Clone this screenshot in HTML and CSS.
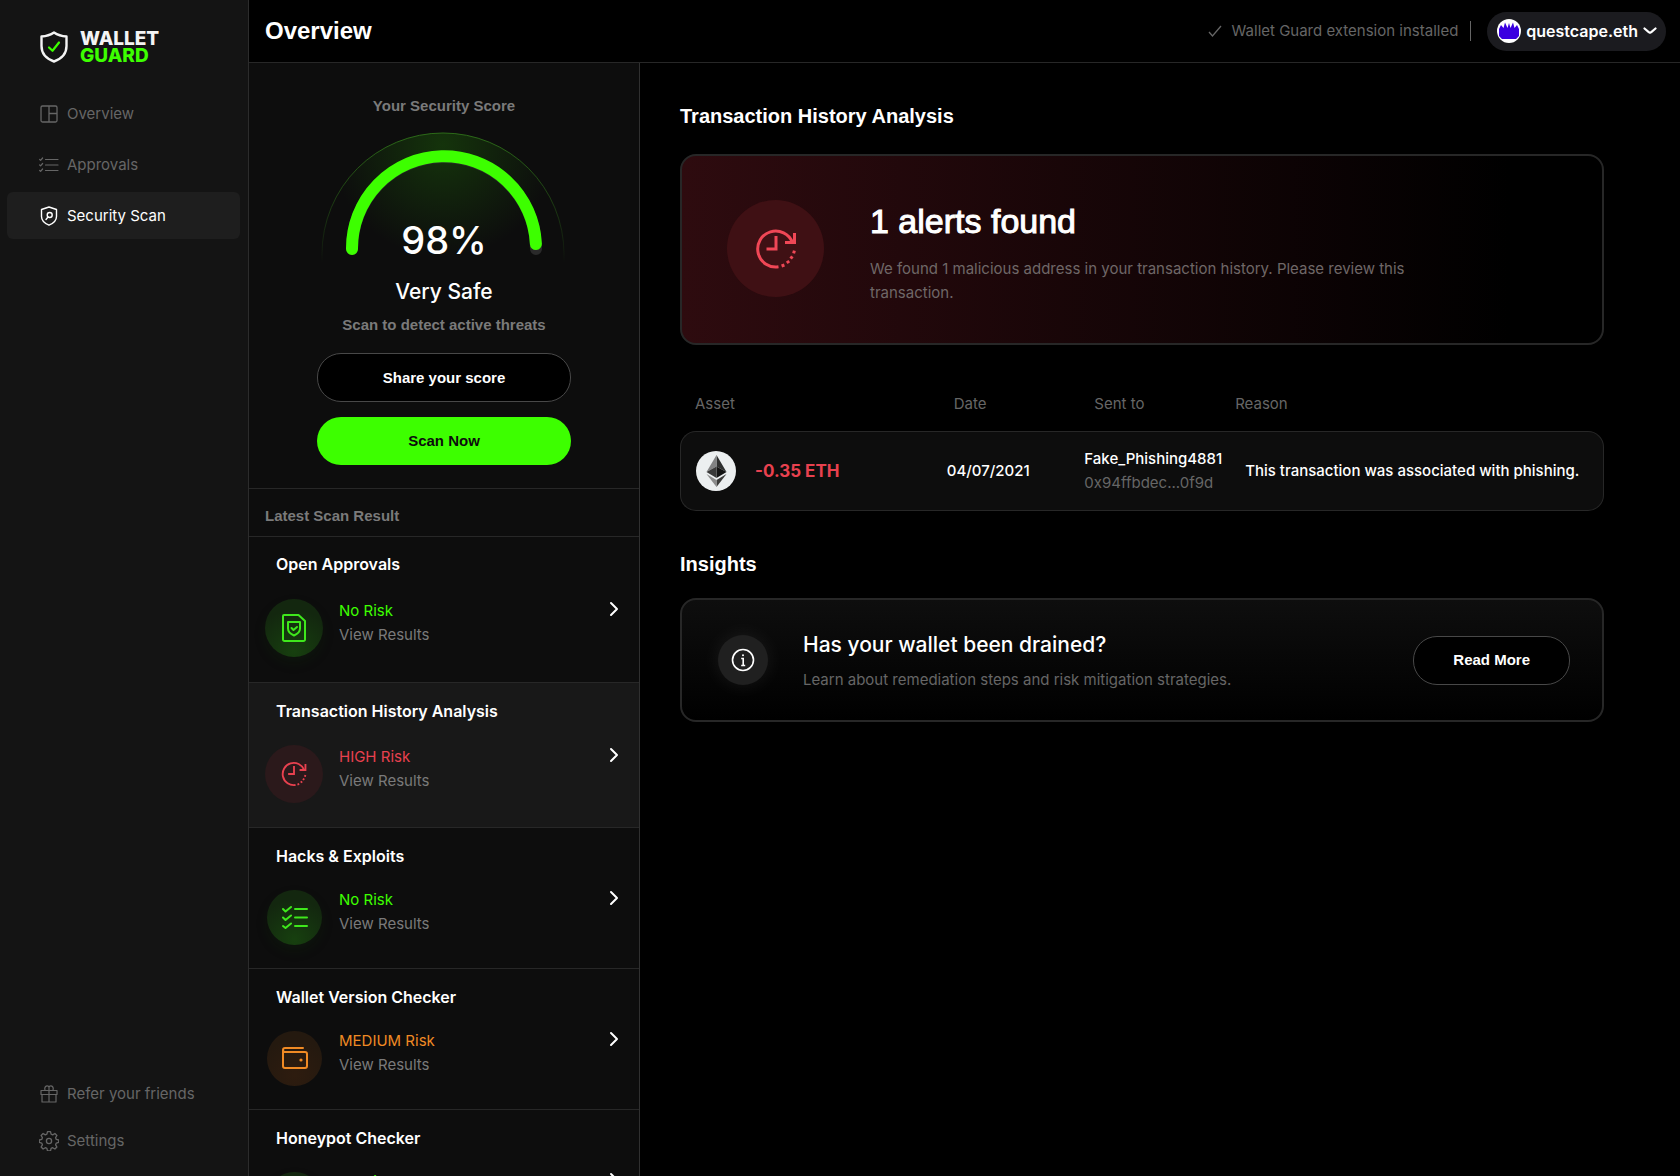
FILE: index.html
```html
<!DOCTYPE html>
<html lang="en">
<head>
<meta charset="utf-8">
<meta name="viewport" content="width=device-width, initial-scale=1">
<title>Wallet Guard – Security Scan</title>
<link rel="stylesheet" href="styles.css">
</head>
<body>
<svg class="sprite" aria-hidden="true">
  <symbol id="i-history" viewBox="0 0 42 42">
    <g fill="none" stroke="currentColor" stroke-width="3">
      <path d="M37.5 14.5A18 18 0 1 0 23.500 38.800"/>
      <path d="M39.500 5v9.500H30M21 8v13H11.500"/>
    </g>
    <g fill="currentColor"><rect x="26.500" y="36" width="3" height="3" transform="rotate(-20 28 37.500)"/><rect x="31.500" y="32.500" width="3" height="3" transform="rotate(-35 33 34)"/><rect x="35" y="28" width="3" height="3" transform="rotate(-55 36.500 29.500)"/><rect x="37.500" y="22.500" width="3" height="3" transform="rotate(-75 39 24)"/></g>
  </symbol>
  <symbol id="i-doc" viewBox="0 0 26 30">
    <g fill="none" stroke="currentColor" stroke-width="2" stroke-linejoin="round" stroke-linecap="round">
      <path d="M3 2h14.500L24 8v18.500a1.500 1.500 0 0 1-1.500 1.500h-19A1.500 1.500 0 0 1 2 26.500V3a1 1 0 0 1 1-1z"/>
      <path d="M7 9h12v6.500c0 3.500-2.500 5.500-6 7-3.500-1.500-6-3.500-6-7z"/>
      <path d="M10.500 15l2 2 3.500-3"/>
    </g>
  </symbol>
  <symbol id="i-checks" viewBox="0 0 26 24">
    <g fill="none" stroke="currentColor" stroke-width="2" stroke-linecap="round" stroke-linejoin="round">
      <path d="M13 4h12M13 12.500h12M13 21h12M1 4l2.500 2.500L9 2M1 12.500L3.500 15 9 10.500M1 21l2.500 2L9 18.500"/>
    </g>
  </symbol>
  <symbol id="i-list" viewBox="0 0 20 16">
    <path fill="none" stroke="currentColor" stroke-width="1.200" stroke-linecap="round" stroke-linejoin="round" d="M6.500 2.500h12.500M6.500 8h12.500M6.500 13.500h12.500M.7 2.500l.9.9 2-2.400M.7 8l.9.9 2-2.400M.7 13.500l.9.9 2-2.400"/>
  </symbol>
  <symbol id="i-wallet" viewBox="0 0 28 24">
    <g fill="none" stroke="currentColor" stroke-width="2" stroke-linejoin="round" stroke-linecap="round">
      <path d="M22 2H4a2 2 0 0 0-2 2v16a2 2 0 0 0 2 2h20a2 2 0 0 0 2-2V8a2 2 0 0 0-2-2H4a2 2 0 0 1-2-2"/>
    </g>
    <circle cx="20" cy="14" r="1.600" fill="currentColor"/>
  </symbol>
  <symbol id="i-chevron" viewBox="0 0 10 16">
    <path d="M2 2l6 6-6 6" fill="none" stroke="currentColor" stroke-width="2" stroke-linecap="round" stroke-linejoin="round"/>
  </symbol>
</svg>

<div class="app">
  <aside class="sidebar">
    <a class="brand" href="#" aria-label="Wallet Guard">
      <svg class="brand__mark" viewBox="0 0 28 32" fill="none" aria-hidden="true">
        <path d="M14 1.500C18 4.200 22 5.200 26.500 5.500V15c0 8-5.500 13-12.500 15.500C7 28 1.500 23 1.500 15V5.500C6 5.200 10 4.200 14 1.500z" stroke="#f4f4f4" stroke-width="2.400" stroke-linejoin="round"/>
        <path d="M9 16.500l3.500 3.300 6.500-8.300" stroke="#3dff00" stroke-width="2.200" stroke-linecap="round" stroke-linejoin="round"/>
      </svg>
      <span class="brand__name"><span>WALLET</span><span class="brand__accent">GUARD</span></span>
    </a>
    <nav class="nav" aria-label="Main">
      <a class="nav__link" href="#">
        <svg class="nav__icon" viewBox="0 0 20 20" fill="none" stroke="currentColor" stroke-width="1.300" aria-hidden="true"><rect x="2" y="2" width="16" height="16" rx="1.500"/><path d="M10 2v16M10 9.500h8" /></svg>
        Overview</a>
      <a class="nav__link" href="#">
        <svg class="nav__icon" aria-hidden="true"><use href="#i-list"/></svg>
        Approvals</a>
      <a class="nav__link nav__link--active" href="#" aria-current="page">
        <svg class="nav__icon" viewBox="0 0 20 20" fill="none" stroke="currentColor" stroke-width="1.400" stroke-linejoin="round" stroke-linecap="round" aria-hidden="true"><path d="M10 1l7.500 2.500v7c0 4-3.500 7-7.500 8.700-4-1.700-7.500-4.700-7.500-8.700v-7z"/><circle cx="10.700" cy="9" r="2.500"/><path d="M9 11l-2 2.500"/></svg>
        Security Scan</a>
    </nav>
    <nav class="nav nav--bottom" aria-label="More">
      <a class="nav__link" href="#">
        <svg class="nav__icon" viewBox="0 0 20 20" fill="none" stroke="currentColor" stroke-width="1.200" stroke-linejoin="round" aria-hidden="true"><path d="M2 6.500h16v4H2zM3 10.500h14V18H3zM10 6.500V18M6 6.500C5 3 7 1.500 9 2l1 1 1-1c2-.5 4 1 3 4.500M10 3v3.500"/></svg>
        Refer your friends</a>
      <a class="nav__link" href="#">
        <svg class="nav__icon" viewBox="0 0 20 20" fill="none" stroke="currentColor" stroke-width="1.300" stroke-linejoin="round" aria-hidden="true"><path d="M8.500 .7h3l.6 2.500 1.600.7 2.200-1.400 2 2-1.300 2.200.7 1.700 2.400.6v2.400l-2.400.7-.7 1.700 1.300 2.200-2 2-2.200-1.300-1.600.7-.6 2.500h-3l-.6-2.500-1.600-.7-2.200 1.300-2-2 1.300-2.200-.7-1.700L.3 11.400V9l2.400-.6.7-1.700-1.300-2.200 2-2 2.200 1.400 1.600-.7z"/><circle cx="10" cy="10" r="2.600"/></svg>
        Settings</a>
    </nav>
  </aside>

  <div class="page">
    <header class="topbar">
      <h1 class="topbar__title">Overview</h1>
      <p class="status">
        <svg class="status__check" viewBox="0 0 14 12" aria-hidden="true"><path d="M1 7l3.500 4L13 1" fill="none" stroke="currentColor" stroke-width="1.300"/></svg>
        Wallet Guard extension installed</p>
      <span class="topbar__rule"></span>
      <button class="account" type="button">
        <svg class="account__avatar" viewBox="0 0 24 24" aria-hidden="true"><circle cx="12" cy="12" r="12" fill="#fff"/><path fill="#3a00e0" d="M2 10l2-4 2.500 3L8 3.500 10.500 9 12 4l1.500 5L16 3.500 17.500 9 20 6l2 4v7l-3 3H5l-3-3z"/></svg>
        questcape.eth
        <svg class="account__caret" viewBox="0 0 14 8" aria-hidden="true"><path d="M1.500 1.500L6 5.300a1.500 1.500 0 0 0 2 0L12.500 1.500" fill="none" stroke="currentColor" stroke-width="2.200" stroke-linecap="round"/></svg>
      </button>
    </header>

    <div class="columns">
      <section class="panel">
        <div class="score">
          <h2 class="score__label">Your Security Score</h2>
          <div class="gauge">
            <svg class="gauge__dial" viewBox="0 0 250 134" fill="none" aria-hidden="true">
              <defs>
                <linearGradient id="rim" x1="0" y1="0" x2="0" y2="1"><stop offset="0" stop-color="#2c6a18"/><stop offset=".9" stop-color="#2c6a18" stop-opacity=".15"/><stop offset="1" stop-color="#2c6a18" stop-opacity="0"/></linearGradient>
                <radialGradient id="glow" gradientUnits="userSpaceOnUse" cx="124" cy="14" r="112"><stop offset="0" stop-color="#1c5a0a" stop-opacity=".5"/><stop offset="1" stop-color="#1c5a0a" stop-opacity="0"/></radialGradient>
              </defs>
              <path d="M3 132v-9a121 121 0 0 1 242 0v9z" fill="url(#glow)"/>
              <path d="M3 132v-9a121 121 0 0 1 242 0v9" stroke="url(#rim)"/>
              <path d="M33 118a92 92 0 0 1 184 0" stroke="#2a2a2a" stroke-width="12" stroke-linecap="round"/>
              <path d="M33 118a92 92 0 0 1 183.900-5" stroke="#3dff00" stroke-width="12" stroke-linecap="round"/>
            </svg>
            <strong class="gauge__value">98%</strong>
          </div>
          <p class="score__grade">Very Safe</p>
          <p class="score__hint">Scan to detect active threats</p>
          <button class="btn btn--outline btn--wide" type="button">Share your score</button>
          <button class="btn btn--primary btn--wide" type="button">Scan Now</button>
        </div>
        <h2 class="panel__heading">Latest Scan Result</h2>
        <ul class="scans">
          <li class="scan">
            <h3 class="scan__title">Open Approvals</h3>
            <a class="scan__body" href="#">
              <span class="scan__badge scan__badge--ok"><svg class="ico-doc" aria-hidden="true"><use href="#i-doc"/></svg></span>
              <span class="scan__text"><span class="risk risk--none">No Risk</span><span>View Results</span></span>
              <svg class="scan__chevron" aria-hidden="true"><use href="#i-chevron"/></svg>
            </a>
          </li>
          <li class="scan scan--selected">
            <h3 class="scan__title">Transaction History Analysis</h3>
            <a class="scan__body" href="#">
              <span class="scan__badge scan__badge--high"><svg class="ico-history" aria-hidden="true"><use href="#i-history"/></svg></span>
              <span class="scan__text"><span class="risk risk--high">HIGH Risk</span><span>View Results</span></span>
              <svg class="scan__chevron" aria-hidden="true"><use href="#i-chevron"/></svg>
            </a>
          </li>
          <li class="scan scan--compact">
            <h3 class="scan__title">Hacks &amp; Exploits</h3>
            <a class="scan__body" href="#">
              <span class="scan__badge scan__badge--ok"><svg class="ico-checks" aria-hidden="true"><use href="#i-checks"/></svg></span>
              <span class="scan__text"><span class="risk risk--none">No Risk</span><span>View Results</span></span>
              <svg class="scan__chevron" aria-hidden="true"><use href="#i-chevron"/></svg>
            </a>
          </li>
          <li class="scan scan--compact">
            <h3 class="scan__title">Wallet Version Checker</h3>
            <a class="scan__body" href="#">
              <span class="scan__badge scan__badge--medium"><svg class="ico-wallet" aria-hidden="true"><use href="#i-wallet"/></svg></span>
              <span class="scan__text"><span class="risk risk--medium">MEDIUM Risk</span><span>View Results</span></span>
              <svg class="scan__chevron" aria-hidden="true"><use href="#i-chevron"/></svg>
            </a>
          </li>
          <li class="scan scan--compact">
            <h3 class="scan__title">Honeypot Checker</h3>
            <a class="scan__body" href="#">
              <span class="scan__badge scan__badge--ok"><svg class="ico-doc" aria-hidden="true"><use href="#i-doc"/></svg></span>
              <span class="scan__text"><span class="risk risk--none">No Risk</span><span>View Results</span></span>
              <svg class="scan__chevron" aria-hidden="true"><use href="#i-chevron"/></svg>
            </a>
          </li>
        </ul>
      </section>

      <main class="main">
        <h2 class="main__heading">Transaction History Analysis</h2>
        <section class="alert">
          <span class="alert__badge"><svg class="alert__icon" aria-hidden="true"><use href="#i-history"/></svg></span>
          <div class="alert__text">
            <h3 class="alert__title">1 alerts found</h3>
            <p class="alert__desc">We found 1 malicious address in your transaction history. Please review this transaction.</p>
          </div>
        </section>

        <table class="tx">
          <thead>
            <tr><th class="tx__asset" scope="col">Asset</th><th class="tx__date" scope="col">Date</th><th class="tx__to" scope="col">Sent to</th><th class="tx__reason" scope="col">Reason</th></tr>
          </thead>
          <tbody>
            <tr>
              <td class="tx__asset">
                <span class="asset">
                  <svg class="asset__logo" viewBox="0 0 40 40" aria-hidden="true"><circle cx="20" cy="20" r="20" fill="#eceff0"/><path fill="#2f3030" d="M20.500 4v11.500l10 5.500z"/><path fill="#828384" d="M20.500 4v11.500l-10 5.500z"/><path fill="#131313" d="M20.500 15.500v11.500l10-6z"/><path fill="#393939" d="M20.500 15.500v11.500l-10-6z"/><path fill="#3c3c3b" d="M20.500 29v7l10-13z"/><path fill="#8c8c8c" d="M20.500 29v7l-10-13z"/></svg>
                  -0.35 ETH
                </span>
              </td>
              <td class="tx__date">04/07/2021</td>
              <td class="tx__to">Fake_Phishing4881<span class="tx__hash">0x94ffbdec...0f9d</span></td>
              <td class="tx__reason">This transaction was associated with phishing.</td>
            </tr>
          </tbody>
        </table>

        <h2 class="main__heading main__heading--insights">Insights</h2>
        <section class="insight">
          <span class="insight__badge"><svg class="insight__icon" viewBox="0 0 24 24" fill="none" stroke="currentColor" stroke-width="1.600" aria-hidden="true"><circle cx="12" cy="12" r="10.500"/><path d="M10.200 10.500h2v7M10.200 17.500h4"/><circle cx="12" cy="7.300" r="1" fill="currentColor" stroke="none"/></svg></span>
          <div class="insight__text">
            <h3 class="insight__title">Has your wallet been drained?</h3>
            <p class="insight__desc">Learn about remediation steps and risk mitigation strategies.</p>
          </div>
          <button class="btn btn--outline" type="button">Read More</button>
        </section>
      </main>
    </div>
  </div>
</div>
</body>
</html>
```
FILE: styles.css
```css
:root {
  --text: "Inter", "Liberation Sans", sans-serif;
  --display: "Liberation Sans", Arial, sans-serif;
  --green: #3dff00;
  --red: #e8414f;
  --orange: #f08a24;
  --muted: #666;
  --line: #272727;
}

* { box-sizing: border-box; }

body {
  margin: 0;
  background: #000;
  color: #fff;
  font: 400 15px/24px var(--text);
}

h1, h2, h3, p, ul { margin: 0; padding: 0; }
a { color: inherit; text-decoration: none; }
button { font: inherit; color: inherit; border: 0; cursor: pointer; }
.sprite { display: none; }

.app { display: flex; height: 100vh; }

/* Sidebar */
.sidebar {
  display: flex;
  flex: none;
  flex-direction: column;
  width: 249px;
  padding: 30px 8px 12px 7px;
  background: #141414;
  border-right: 1px solid #2c2c2c;
}
.brand { display: flex; align-items: center; gap: 12px; padding-left: 33px; }
.brand__mark { width: 28px; height: 32px; }
.brand__name { display: grid; font-size: 19px; line-height: 17px; font-weight: 800; color: #f4f4f4; }
.brand__accent { color: var(--green); }
.nav { display: grid; gap: 4px; margin-top: 26px; }
.nav--bottom { gap: 0; margin-top: auto; }
.nav__link {
  display: flex;
  align-items: center;
  gap: 8px;
  height: 47px;
  padding-left: 32px;
  border-radius: 6px;
  color: var(--muted);
}
.nav__link--active { background: #1e1e1e; color: #fff; }
.nav__icon { width: 20px; height: 20px; }

/* Top bar */
.page { display: flex; flex: 1; flex-direction: column; min-width: 0; }
.topbar {
  display: flex;
  flex: none;
  align-items: center;
  height: 63px;
  padding: 0 14px 0 16px;
  border-bottom: 1px solid var(--line);
}
.topbar__title { margin-right: auto; font: 700 24px/32px var(--display); }
.status { display: flex; align-items: center; gap: 10px; color: var(--muted); }
.status__check { width: 14px; height: 12px; }
.topbar__rule { width: 1px; height: 20px; margin: 0 16px 0 12px; background: var(--muted); }
.account {
  display: flex;
  align-items: center;
  gap: 5px;
  height: 39px;
  padding: 0 9px 0 10px;
  border-radius: 20px;
  background: #1b1b1f;
  font-size: 16px;
  font-weight: 600;
}
.account__avatar { width: 24px; height: 24px; }
.account__caret { width: 14px; height: 8px; }

/* Score and scan list */
.columns { display: flex; flex: 1; min-height: 0; }
.panel {
  flex: none;
  width: 391px;
  overflow-y: auto;
  scrollbar-width: none;
  background: #0d0d0d;
  border-right: 1px solid #303030;
}
.score {
  display: flex;
  flex-direction: column;
  align-items: center;
  padding: 31px 16px 23px;
  border-bottom: 1px solid var(--line);
}
.score__label, .score__hint, .panel__heading {
  font: 700 15px/24px var(--display);
  color: #7a7a7a;
}
.gauge { display: grid; margin-top: 13px; justify-items: center; }
.gauge > * { grid-area: 1 / 1; }
.gauge__dial { width: 250px; height: 134px; }
.gauge__value { align-self: end; font-size: 38px; line-height: 50px; font-weight: 500; }
.score__grade { margin-top: 11px; font-size: 21px; line-height: 32px; font-weight: 500; }
.score__hint { margin: 5px 0 16px; }
.btn {
  height: 48px;
  padding: 0 39px;
  border-radius: 24px;
  font: 700 15px/24px var(--display);
}
.btn--wide { width: 254px; }
.btn--outline { height: 49px; background: #000; border: 1px solid #484848; }
.btn--primary { margin-top: 15px; background: var(--green); color: #0d0d0d; }
.panel__heading { padding: 15px 16px 8px; border-bottom: 1px solid var(--line); }

.scans { list-style: none; }
.scan { padding: 15px 20px 25px 16px; border-bottom: 1px solid var(--line); }
.scan--selected { padding: 16px 20px 24px 16px; background: #181818; }
.scan__title { padding-left: 11px; font-size: 16px; line-height: 24px; font-weight: 600; }
.scan__body { display: flex; align-items: center; gap: 16px; margin-top: 23px; }
.scan--selected .scan__body { margin-top: 22px; }
.scan__badge {
  display: grid;
  flex: none;
  place-items: center;
  width: 58px;
  height: 58px;
  border-radius: 50%;
}
.scan__badge--ok { background: radial-gradient(circle at 50% 90%, #17400f, #13270f 70%); color: #3fe81c; box-shadow: 0 6px 12px #10300a33; }
.scan__badge--high { background: #2b191b; color: var(--red); }
.scan__badge--medium { background: radial-gradient(circle at 50% 80%, #2e1c0f, #24190f 70%); color: var(--orange); }
.scan__text { display: grid; flex: 1; padding-bottom: 10px; color: #7a7a7a; }
.scan__chevron { width: 10px; height: 16px; margin-bottom: 38px; }
.scan--compact { padding: 16px 20px 22px 16px; }
.scan--compact .scan__body { margin-top: 20px; padding-left: 2px; gap: 17px; }
.scan--compact .scan__badge { width: 55px; height: 55px; }
.risk--none { color: var(--green); }
.risk--high { color: var(--red); }
.risk--medium { color: var(--orange); }
.ico-doc { width: 26px; height: 30px; }
.ico-history { width: 26px; height: 26px; }
.ico-checks { width: 26px; height: 24px; }
.ico-wallet { width: 28px; height: 24px; }

/* Main column */
.main { flex: 1; min-width: 0; overflow-y: auto; padding: 39px 76px 40px 40px; }
.main__heading { font: 700 20px/28px var(--display); }
.main__heading--insights { margin-top: 39px; }
.alert {
  display: flex;
  gap: 46px;
  margin-top: 24px;
  padding: 44px 160px 38px 45px;
  border: 2px solid var(--line);
  border-radius: 16px;
  background: linear-gradient(90deg, #2e0b0f, #000 90%);
}
.alert__badge {
  display: grid;
  flex: none;
  place-items: center;
  width: 97px;
  height: 97px;
  border-radius: 50%;
  background: #3f1014;
}
.alert__icon { width: 42px; height: 42px; color: #f04756; }
.alert__title { font: 400 34px/42px var(--display); -webkit-text-stroke: 1px currentColor; }
.alert__desc { margin-top: 15px; color: #6f6767; }

.tx { width: 100%; margin-top: 47px; border-spacing: 0; table-layout: fixed; }
.tx th { padding: 0 0 15px; text-align: left; font-weight: 400; color: var(--muted); }
.tx td {
  height: 80px;
  padding: 0;
  background: #0d0d0d;
  border: solid var(--line);
  border-width: 1px 0;
  font-weight: 500;
}
.tx td:first-child { border-left-width: 1px; border-radius: 16px 0 0 16px; }
.tx td:last-child { border-right-width: 1px; border-radius: 0 16px 16px 0; }
.tx__asset { width: 28%; }
.tx__date { width: 15%; }
.tx__to { width: 16%; }
.tx th.tx__asset, .tx td.tx__asset { padding-left: 15px; }
.tx th.tx__date { padding-left: 15px; }
.tx td.tx__date { padding-left: 8px; }
.tx th.tx__to { padding-left: 17px; }
.tx td.tx__to { padding-left: 7px; }
.tx th.tx__reason { padding-left: 10px; }
.tx td.tx__reason { padding-left: 20px; }
.tx__hash { display: block; font-weight: 400; color: var(--muted); }
.asset { display: flex; align-items: center; gap: 19px; font-size: 17px; font-weight: 700; color: var(--red); }
.asset__logo { width: 40px; height: 40px; }

.insight {
  display: flex;
  align-items: center;
  gap: 35px;
  min-height: 124px;
  margin-top: 20px;
  padding: 24px 32px 24px 36px;
  border: 2px solid var(--line);
  border-radius: 16px;
  background: linear-gradient(#0e0e0e, #000);
}
.insight__badge {
  display: grid;
  flex: none;
  place-items: center;
  width: 50px;
  height: 50px;
  border-radius: 50%;
  background: #202020;
  box-shadow: 0 0 20px #ffffff14;
}
.insight__icon { width: 24px; height: 24px; }
.insight__text { flex: 1; }
.insight__title { font-size: 21px; line-height: 32px; font-weight: 500; }
.insight__desc { margin-top: 7px; color: var(--muted); }
```
